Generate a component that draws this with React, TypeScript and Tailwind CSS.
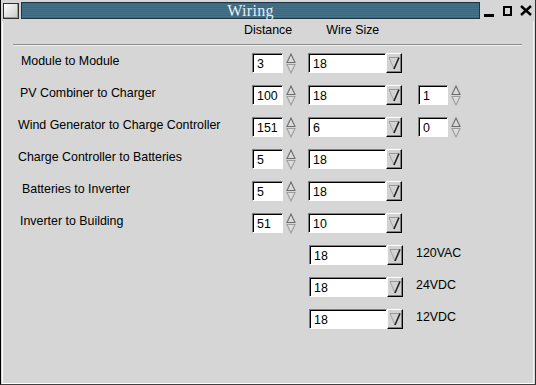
import React from "react";

type Row = {
  label: string;
  pl: string;
  dist: string;
  wire: string;
  extra?: string;
};

const rows: Row[] = [
  { label: "Module to Module", pl: "pl-[18px]", dist: "3", wire: "18" },
  { label: "PV Combiner to Charger", pl: "pl-[17px]", dist: "100", wire: "18", extra: "1" },
  { label: "Wind Generator to Charge Controller", pl: "pl-[15px]", dist: "151", wire: "6", extra: "0" },
  { label: "Charge Controller to Batteries", pl: "pl-[15px]", dist: "5", wire: "18" },
  { label: "Batteries to Inverter", pl: "pl-[19px]", dist: "5", wire: "18" },
  { label: "Inverter to Building", pl: "pl-[17px]", dist: "51", wire: "10" },
];

const volts = ["120VAC", "24VDC", "12VDC"];

function Field({ value, w }: { value: string; w: string }) {
  return (
    <div
      className={`${w} h-[20px] bg-white border border-t-[#808080] border-l-[#808080] border-b-white border-r-white shadow-[inset_1px_1px_0_#000] pl-[4px] pt-[2px] text-[12.4px] leading-[16px] text-black`}
    >
      {value}
    </div>
  );
}

function SpinArrows() {
  return (
    <svg width="10" height="21" viewBox="0 0 10 21" className="ml-[3px] shrink-0">
      <polygon points="5,1 1,9.5 9,9.5" fill="#d9d9d9" stroke="#6c6c6c" strokeWidth="1.1" />
      <polygon points="1,11.5 9,11.5 5,20" fill="#dddddd" stroke="#9d9d9d" strokeWidth="1.1" />
    </svg>
  );
}

function Spin({ value, w }: { value: string; w: string }) {
  return (
    <div className="flex items-start">
      <Field value={value} w={w} />
      <SpinArrows />
    </div>
  );
}

function Combo({ value }: { value: string }) {
  return (
    <div className="flex">
      <Field value={value} w="w-[78px]" />
      <div className="w-[16px] h-[20px] flex items-center justify-center bg-[#d2d2d2] border border-t-white border-l-white border-b-black border-r-black shadow-[inset_-1px_-1px_0_#808080]">
        <svg width="12" height="14" viewBox="0 0 12 14">
          <line x1="1" y1="1.5" x2="11" y2="1.5" stroke="#9a9a9a" strokeWidth="1" />
          <line x1="1" y1="1.5" x2="6" y2="13" stroke="#a4a4a4" strokeWidth="1" />
          <line x1="11" y1="1.5" x2="6" y2="13" stroke="#222" strokeWidth="1.6" />
        </svg>
      </div>
    </div>
  );
}

export default function App() {
  return (
    <div className="w-[536px] h-[385px] bg-[#d6d6d6] border-l border-l-black border-b border-b-[#404040] border-r border-r-[#303030] font-['Liberation_Sans',Arial,sans-serif] text-black overflow-hidden flex flex-col">
      {/* title bar */}
      <div className="h-[21px] flex items-center shrink-0">
        <div className="ml-[2px] w-[16px] h-[16px] border border-[#303030] bg-[linear-gradient(135deg,#ffffff,#c8c8c8)] shadow-[inset_-1px_-1px_0_#9a9a9a]" />
        <div className="ml-[2px] w-[459px] h-[17px] border border-[#1e3542] bg-[repeating-linear-gradient(to_bottom,#3d687c_0px,#3d687c_1px,#46738a_1px,#46738a_2px)] flex items-center justify-center">
          <span className="font-['Liberation_Serif',serif] text-[16px] leading-[16px] text-[#e8eef2] tracking-[0.3px]">
            Wiring
          </span>
        </div>
        <div className="flex items-center ml-[4px]">
          <div className="w-[10px] h-[3px] bg-black mt-[9px]" />
          <div className="ml-[9px] w-[9px] h-[10px] border-2 border-black" />
          <svg width="12" height="11" viewBox="0 0 12 11" className="ml-[8px]">
            <line x1="1" y1="1" x2="11" y2="10" stroke="#000" strokeWidth="2.4" />
            <line x1="11" y1="1" x2="1" y2="10" stroke="#000" strokeWidth="2.4" />
          </svg>
        </div>
      </div>

      {/* content */}
      <div className="flex-1 mx-[1px] border-l border-l-white border-r border-r-[#f4f4f4] border-b border-b-white flex flex-col">
        <div className="flex text-[12.4px] leading-[14px] pt-[2px] h-[23px]">
          <span className="ml-[241px]">Distance</span>
          <span className="ml-[34px]">Wire Size</span>
        </div>
        <div className="ml-[10px] mr-[11px] h-[2px] border-t border-t-[#8a8a8a] border-b border-b-[#f0f0f0]" />

        <div className="mt-[7px] flex flex-col">
          {rows.map((r) => (
            <div key={r.label} className="h-[32px] flex items-start">
              <div className={`w-[249px] shrink-0 ${r.pl} mt-[1px] text-[12.4px] leading-[14px]`}>
                {r.label}
              </div>
              <Spin value={r.dist} w="w-[31px]" />
              <div className="ml-[12px]">
                <Combo value={r.wire} />
              </div>
              {r.extra && (
                <div className="ml-[16px]">
                  <Spin value={r.extra} w="w-[30px]" />
                </div>
              )}
            </div>
          ))}
          {volts.map((v) => (
            <div key={v} className="h-[32px] flex items-start">
              <div className="ml-[306px]">
                <Combo value="18" />
              </div>
              <span className="ml-[13px] mt-[1px] text-[12.4px] leading-[14px]">{v}</span>
            </div>
          ))}
        </div>
      </div>
    </div>
  );
}
